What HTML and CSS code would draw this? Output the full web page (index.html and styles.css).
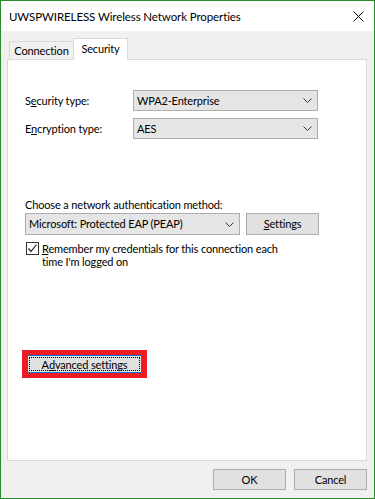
FILE: index.html
```html
<!DOCTYPE html>
<html>
<head>
<meta charset="utf-8">
<link rel="stylesheet" href="styles.css">
</head>
<body>
<div class="window">
  <div class="titlebar">
    <span class="title">UWSPWIRELESS Wireless Network Properties</span>
    <svg class="close" width="11" height="11" viewBox="0 0 11 11"><path d="M0.5 0.5 L10.5 10.5 M10.5 0.5 L0.5 10.5" stroke="#000" stroke-width="1" fill="none"/></svg>
  </div>
  <div class="tabs">
    <div class="tab">Connection</div>
    <div class="tab active">Security</div>
  </div>
  <div class="panel">
    <div class="field">
      <span class="label">S<u>e</u>curity type:</span>
      <div class="select wide"><span>WPA2-Enterprise</span><svg class="chev" width="9" height="5" viewBox="0 0 9 5"><path d="M0.5 0.5 L4.5 4.5 L8.5 0.5" stroke="#333" fill="none"/></svg></div>
    </div>
    <div class="field second">
      <span class="label">E<u>n</u>cryption type:</span>
      <div class="select wide"><span>AES</span><svg class="chev" width="9" height="5" viewBox="0 0 9 5"><path d="M0.5 0.5 L4.5 4.5 L8.5 0.5" stroke="#333" fill="none"/></svg></div>
    </div>
    <div class="choose">Choose a network authentication method:</div>
    <div class="method-row">
      <div class="select method"><span>Microsoft: Protected EAP (PEAP)</span><svg class="chev" width="9" height="5" viewBox="0 0 9 5"><path d="M0.5 0.5 L4.5 4.5 L8.5 0.5" stroke="#333" fill="none"/></svg></div>
      <div class="btn settings"><u>S</u>ettings</div>
    </div>
    <div class="check-row">
      <div class="checkbox"><svg width="11" height="11" viewBox="0 0 11 11"><path d="M1.5 5.5 L4 8.5 L9.5 1.5" stroke="#222" stroke-width="1.2" fill="none"/></svg></div>
      <div class="check-text"><u>R</u>emember my credentials for this connection each<br>time I'm logged on</div>
    </div>
    <div class="highlight">
      <div class="btn advanced"><span class="focus">A<u>d</u>vanced settings</span></div>
    </div>
  </div>
  <div class="footer">
    <div class="btn ok">OK</div>
    <div class="btn">Cancel</div>
  </div>
</div>
</body>
</html>
```

FILE: styles.css
```css
* { box-sizing: border-box; }
html, body { margin: 0; padding: 0; }
body {
  font-family: Lato, "Noto Sans", sans-serif;
  font-size: 11px;
  letter-spacing: -0.15px;
  color: #000;
  background: #fff;
}
u { text-underline-offset: 1px; }
.window {
  width: 375px;
  height: 499px;
  border: 1px solid #2b8a2b;
  background: #f0f0f0;
  display: flex;
  flex-direction: column;
}
.titlebar {
  height: 30px;
  background: #fff;
  display: flex;
  align-items: center;
  padding-left: 8px;
  padding-right: 10px;
}
.title {
  flex: 1;
  font-size: 11.5px;
  letter-spacing: -0.1px;
  color: #000;
}
.close { display: block; }
.tabs {
  height: 28px;
  display: flex;
  align-items: flex-end;
  padding-left: 8px;
}
.tab {
  height: 18px;
  width: 64px;
  border: 1px solid #d9d9d9;
  border-bottom: none;
  border-right: none;
  background: #f0f0f0;
  display: flex;
  align-items: center;
  justify-content: center;
  line-height: 1;
}
.tab.active {
  height: 22px;
  width: 55px;
  border-right: 1px solid #d9d9d9;
  background: #fff;
  margin-bottom: -1px;
  position: relative;
  z-index: 1;
  padding-bottom: 3px;
}
.panel {
  flex: 1;
  margin: 0 7px 0 6px;
  background: #fff;
  border: 1px solid #d9d9d9;
  padding: 30px 0 0 17px;
  display: flex;
  flex-direction: column;
  align-items: flex-start;
}
.field {
  display: flex;
  align-items: center;
  height: 21px;
}
.field.second { margin-top: 7px; }
.label { width: 108px; }
.select {
  height: 21px;
  background: #e5e5e5;
  border: 1px solid #adadad;
  display: flex;
  align-items: center;
  justify-content: space-between;
  padding: 0 5px 1px 3px;
}
.select.wide { width: 185px; }
.select.method { width: 215px; height: 22px; }
.chev { display: block; margin-top: 1px; }
.choose {
  margin-top: 58px;
  line-height: 15px;
}
.method-row {
  margin-top: 1px;
  display: flex;
  gap: 6px;
}
.btn {
  height: 21px;
  width: 73px;
  background: #e1e1e1;
  border: 1px solid #adadad;
  display: flex;
  align-items: center;
  justify-content: center;
  padding-bottom: 1px;
}
.btn.settings { height: 22px; }
.check-row {
  margin-top: 7px;
  display: flex;
  margin-left: 1px;
}
.checkbox {
  width: 13px;
  height: 13px;
  border: 1px solid #333;
  background: #fff;
  display: flex;
  align-items: center;
  justify-content: center;
}
.checkbox svg { display: block; }
.check-text {
  margin-left: 3px;
  line-height: 13px;
}
.highlight {
  margin-top: 82px;
  margin-left: -3px;
  border: 5px solid #ec1c24;
}
.btn.advanced {
  width: 115px;
  height: 18px;
  border: 1px solid #0078d7;
  padding: 1px;
}
.focus {
  width: 100%;
  height: 100%;
  border: 1px dotted #000;
  display: flex;
  align-items: center;
  justify-content: center;
}
.footer {
  height: 37px;
  display: flex;
  justify-content: flex-end;
  gap: 8px;
  padding: 8px 7px 8px 0;
}
```
